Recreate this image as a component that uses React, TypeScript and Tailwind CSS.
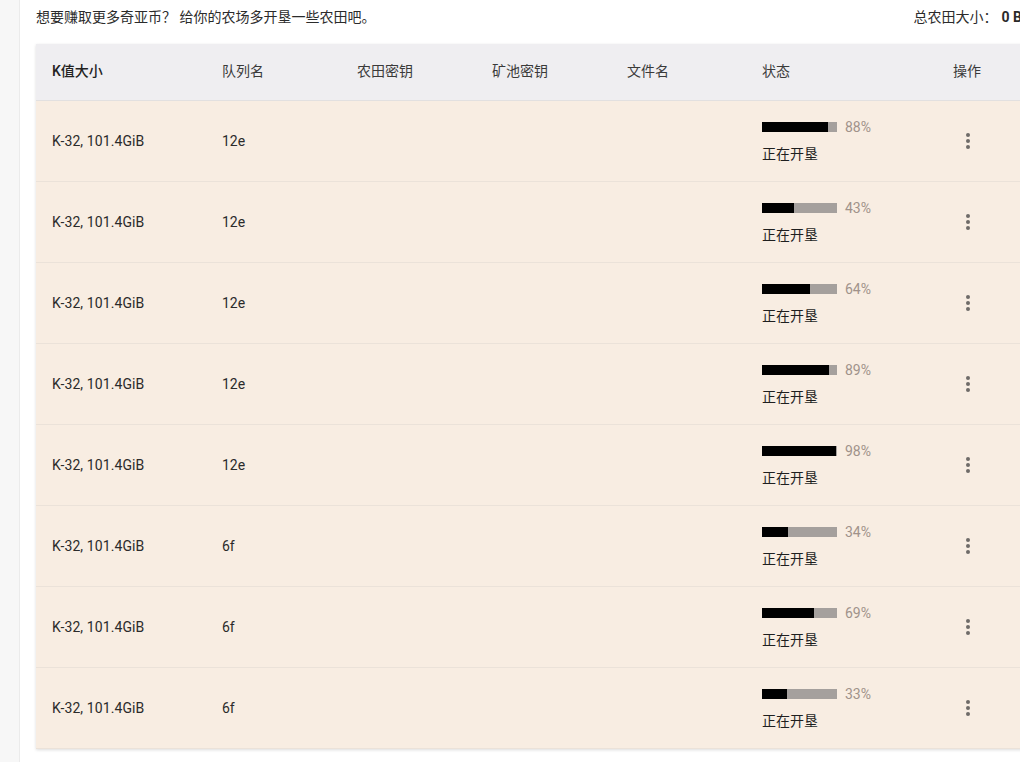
import React from "react";

const rows = [
  { q: "12e", p: 88 },
  { q: "12e", p: 43 },
  { q: "12e", p: 64 },
  { q: "12e", p: 89 },
  { q: "12e", p: 98 },
  { q: "6f", p: 34 },
  { q: "6f", p: 69 },
  { q: "6f", p: 33 },
];

const font = { fontFamily: 'Roboto, "Noto Sans CJK SC", sans-serif' };

function Dots() {
  return (
    <svg width="24" height="24" viewBox="0 0 24 24" fill="#6f6b68">
      <circle cx="12" cy="6" r="2" />
      <circle cx="12" cy="12" r="2" />
      <circle cx="12" cy="18" r="2" />
    </svg>
  );
}

const grid = "grid grid-cols-[170px_135px_135px_135px_135px_191px_89px]";

export default function App() {
  return (
    <div className="flex h-[762px] w-[1020px] overflow-hidden bg-white" style={font}>
      <div className="w-[20px] shrink-0 bg-[#f7f7f7] border-r border-[#ebebeb]" />
      <div className="pl-[16px] shrink-0">
        <div className="w-[986px] pt-[5px] flex justify-between items-center h-[29px] text-[14px] text-[#2b2b2b]">
          <span className="leading-[24px]">想要赚取更多奇亚币？ 给你的农场多开垦一些农田吧。</span>
          <span className="leading-[24px]">
            总农田大小：<span className="font-bold ml-[4px]">0 B</span>
          </span>
        </div>
        <div className="mt-[15px] w-[990px] bg-white shadow-[0_1px_3px_rgba(0,0,0,0.14)]">
          <div className={`${grid} h-[57px] pb-[2px] items-center bg-[#efeef1] border-b border-[#e2e0e0] text-[14px] text-[#3a3a3a]`}>
            <div className="pl-[16px] font-medium text-[#222]">K值大小</div>
            <div className="pl-[16px]">队列名</div>
            <div className="pl-[16px]">农田密钥</div>
            <div className="pl-[16px]">矿池密钥</div>
            <div className="pl-[16px]">文件名</div>
            <div className="pl-[16px]">状态</div>
            <div className="pl-[16px]">操作</div>
          </div>
          {rows.map((r, i) => (
            <div
              key={i}
              className={`${grid} h-[81px] bg-[#f8ede2] border-b border-[#ebe2d9] text-[14px] text-[#2b2b2b]`}
            >
              <div className="pl-[16px] flex items-center tracking-[0.1px]">K-32, 101.4GiB</div>
              <div className="pl-[16px] flex items-center">{r.q}</div>
              <div />
              <div />
              <div />
              <div className="pl-[16px] pt-[17px]">
                <div className="flex items-center h-[18px]">
                  <div className="w-[75px] h-[10px] bg-[#a5a09d]">
                    <div className="h-full bg-black" style={{ width: `${r.p}%` }} />
                  </div>
                  <span className="ml-[8px] text-[14px] text-[#a0928a]">{r.p}%</span>
                </div>
                <div className="mt-[8px] leading-[20px] text-[#1f1f1f]">正在开垦</div>
              </div>
              <div className="pl-[19px] flex items-center">
                <Dots />
              </div>
            </div>
          ))}
        </div>
      </div>
    </div>
  );
}
